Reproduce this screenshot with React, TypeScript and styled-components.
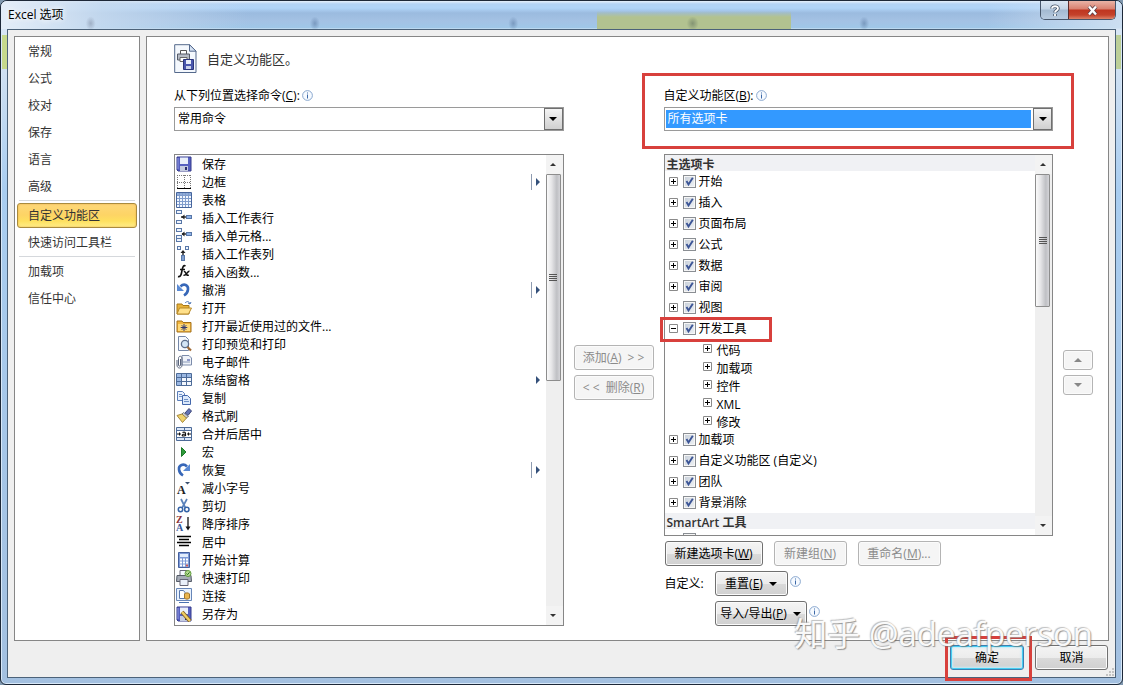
import React from "react";
import styled, { createGlobalStyle, css } from "styled-components";

const GlobalStyle = createGlobalStyle`
  *, *::before, *::after { box-sizing: border-box; }
  body {
    margin: 0;
    background: #7f97ae;
    font-family: "Open Sans", "Noto Sans CJK SC", sans-serif;
    font-size: 12px;
    line-height: 16px;
    color: #1a1a1a;
  }
  button, select, input { font: inherit; color: inherit; margin: 0; }
`;

/* ---------- window frame ---------- */

const Window = styled.div`
  position: relative;
  display: flex;
  flex-direction: column;
  min-height: 100vh;
  padding: 0 6px 6px;
  border: 1px solid #1d2838;
  border-radius: 7px 7px 6px 6px;
  background:
    linear-gradient(#c6d98c, #c6d98c) 0 34px / 6px 34px no-repeat,
    linear-gradient(#bccf98, #bccf98) 100% 34px / 6px 34px no-repeat,
    linear-gradient(#dfeaf7 0, #cfe0f2 70px, #a9cdf0 190px, #a3c0e0 100%);
  box-shadow: inset 0 0 0 1px #d8e8f8;
`;

const TitleBar = styled.header`
  display: flex;
  align-items: flex-start;
  justify-content: space-between;
  height: 28px;
  margin: 0 -6px;
  padding: 0 0 0 7px;
  border-radius: 6px 6px 0 0;
  background:
    radial-gradient(ellipse 5px 7px at 8% 80%, #8795ab99, transparent),
    radial-gradient(ellipse 5px 7px at 28% 80%, #5f7ea699, transparent),
    radial-gradient(ellipse 5px 7px at 45.7% 80%, #5f7ea699, transparent),
    radial-gradient(ellipse 6px 7px at 61.7% 80%, #66776099, transparent),
    radial-gradient(ellipse 5px 7px at 77% 80%, #5f7ea699, transparent),
    linear-gradient(transparent 10px, #b2c290 16px) 64.3% 0 / 194px 100% no-repeat,
    linear-gradient(90deg, #e4edf8 0, #c9dcf0cc 9%, #a9c8e800 22%, transparent 88%, #d7e5f4cc 100%),
    linear-gradient(#e6f0fb 0, #b3d3f5 3px, #b0d4f8 7px, #9bbbdf 12px, #a4c2e4 20px, #9fc7e8 27px, #d7e9f7 28px);
`;

const Title = styled.h1`
  margin: 0;
  padding-top: 6px;
  font-size: 12px;
  font-weight: 400;
  color: #000;
  text-shadow: 0 0 6px #fff, 0 0 6px #fff;
`;

const CaptionButtons = styled.div`
  display: flex;
  margin-right: 6px;
  border: 1px solid #47566b;
  border-top: 0;
  border-radius: 0 0 5px 5px;
  overflow: hidden;
`;

const CaptionButton = styled.button<{ $close?: boolean }>`
  display: grid;
  place-items: center;
  width: ${(p) => (p.$close ? 47 : 27)}px;
  height: 18px;
  padding: 0;
  border: 0;
  border-left: ${(p) => (p.$close ? "1px solid #5e2c2a" : "0")};
  background: ${(p) =>
    p.$close
      ? "linear-gradient(#e9b3a6 0, #d9806f 8px, #bf3520 9px, #c4422b 14px, #dd8268 18px)"
      : "linear-gradient(#dce7f3 0, #c3d4e6 8px, #a3b9d1 9px, #b8cbe0 18px)"};
`;

const Client = styled.main`
  flex: 1;
  display: flex;
  flex-direction: column;
  padding: 6px 6px 0;
  border: 1px solid #4c6279;
  background: #efefef;
`;

const Panels = styled.div`
  flex: 1;
  display: grid;
  grid-template-columns: 126px minmax(0, 1fr);
  gap: 6px;
`;

/* ---------- category list ---------- */

const Sidebar = styled.nav`
  display: flex;
  flex-direction: column;
  padding: 1px 2px 0;
  border: 1px solid #868686;
  background: #fff;
`;

const NavItem = styled.button<{ $active?: boolean }>`
  height: 25px;
  margin: 1px 0;
  padding: 0 10px;
  border: 1px solid transparent;
  border-radius: 3px;
  background: none;
  text-align: left;
  color: #333;
  ${(p) =>
    p.$active &&
    css`
      border-color: #a98b3e;
      background: linear-gradient(#fdd779 0, #fdd465 11px, #fee05f 17px, #fff296 25px);
      box-shadow: inset 0 0 2px #e9a94a;
    `}
`;

const NavSeparator = styled.hr`
  width: auto;
  height: 1px;
  margin: 0 2px 1px;
  border: 0;
  background: #d5d8dc;
`;

/* ---------- main page ---------- */

const Page = styled.section`
  padding: 7px 15px 14px 27px;
  border: 1px solid #868686;
  background: #fff;
`;

const PageHeading = styled.header`
  display: flex;
  align-items: center;
  gap: 10px;
  height: 30px;
  margin-bottom: 13px;
`;

const PageTitle = styled.h2`
  margin: 0;
  font-size: 13px;
  font-weight: 400;
  color: #333;
`;

const Columns = styled.div`
  display: grid;
  grid-template-columns: minmax(0, 1fr) 80px minmax(0, 1fr) 30px;
  column-gap: 10px;
  row-gap: 23px;
`;

const Field = styled.div<{ $column: number }>`
  grid-column: ${(p) => p.$column};
  position: relative;
  display: flex;
  flex-direction: column;
  gap: 4px;
`;

const FieldLabel = styled.label`
  display: flex;
  align-items: center;
  gap: 2px;
  height: 16px;
  color: #000;

  > span { padding-top: 2px; }
`;

const ComboFrame = styled.div`
  display: flex;
  height: 24px;
  border: 1px solid #9a9a9a;
  background: #fff;
`;

const ComboSelect = styled.select<{ $selected?: boolean }>`
  appearance: none;
  flex: 1;
  min-width: 0;
  margin: 2px 2px 2px 1px;
  padding: 0 2px;
  border: 0;
  outline: 0;
  line-height: 16px;
  background: ${(p) => (p.$selected ? "#3399ff" : "#fff")};
  color: ${(p) => (p.$selected ? "#fff" : "#000")};
`;

const ComboArrow = styled.span`
  display: grid;
  place-items: center;
  width: 19px;
  border: 1px solid #6f6f6f;
  background: linear-gradient(#f4f4f4, #d0d0d0);
`;

const ListFrame = styled.div`
  grid-column: 1;
  display: flex;
  min-height: 0;
  border: 1px solid #868686;
  background: #fff;
`;

const CommandList = styled.ul`
  flex: 1;
  min-width: 0;
  margin: 0;
  padding: 1px 6px 1px 1px;
  list-style: none;
`;

const CommandRow = styled.button`
  display: flex;
  align-items: flex-start;
  gap: 10px;
  width: 100%;
  height: 18px;
  padding: 0;
  border: 0;
  background: none;
  text-align: left;
  color: #000;

  > span { flex: 1; padding-top: 1px; }
`;

const SubmenuMark = styled.i<{ $split?: boolean }>`
  display: grid;
  place-items: center;
  height: 16px;
  padding-left: 4px;
  border-left: 1px solid ${(p) => (p.$split ? "#8e9bb0" : "transparent")};
`;

const MiddleButtons = styled.div`
  display: flex;
  flex-direction: column;
  gap: 5px;
  padding-top: 191px;
`;

const OrderButtons = styled(MiddleButtons)`
  padding-top: 196px;
`;

const PushButton = styled.button<{ $width?: number; $height?: number; $primary?: boolean }>`
  display: inline-flex;
  align-items: center;
  justify-content: center;
  gap: 6px;
  flex: none;
  width: ${(p) => (p.$width ? p.$width + "px" : "100%")};
  height: ${(p) => p.$height ?? 25}px;
  padding: 0;
  border: 1px solid #707070;
  border-radius: 3px;
  background: linear-gradient(#f4f4f4 0, #ececec 50%, #dadada 51%, #d0d0d0 100%);
  box-shadow: inset 0 0 0 1px #fbfbfb;
  white-space: nowrap;
  color: #000;

  &:disabled {
    border-color: #b4b4b4;
    background: #f5f5f5;
    color: #8b8b8b;
  }
  ${(p) =>
    p.$primary &&
    css`
      border-color: #3c7fb1;
      box-shadow: inset 0 0 0 1px #45cdf2, inset 0 0 2px 2px #c4ebf7;
    `}
`;

const RibbonColumn = styled.div`
  position: relative;
  display: flex;
  flex-direction: column;
  gap: 5px;
`;

const TreeFrame = styled(ListFrame)`
  flex: 1 1 0;
`;

const Tree = styled.div`
  flex: 1;
  min-width: 0;
  overflow: hidden;
`;

const TreeHeading = styled.h3`
  height: 16px;
  margin: 0;
  padding: 2px 2px 0;
  background: #f0f1f4;
  font-size: 12px;
  line-height: 15px;
  font-weight: 600;
  color: #333;
`;

const TreeRow = styled.div`
  display: flex;
  align-items: center;
  height: 21px;
  padding-left: 4px;
  color: #000;
`;

const TreeChild = styled(TreeRow)`
  gap: 5px;
  height: 18px;
  padding-left: 38px;

  > span { padding-top: 5px; }
`;

const Expander = styled.button`
  display: block;
  flex: none;
  width: 9px;
  height: 9px;
  padding: 0;
  border: 0;
  background: none;

  svg { display: block; }
`;

const CheckLabel = styled.label`
  display: flex;
  align-items: center;
  gap: 3px;
  margin-left: 5px;
`;

const CheckBox = styled.span`
  display: grid;
  width: 13px;
  height: 13px;

  > * { grid-area: 1 / 1; }
  svg { position: relative; pointer-events: none; }
`;

const CheckInput = styled.input`
  appearance: none;
  width: 13px;
  height: 13px;
  border: 1px solid #8a8e93;
  background: linear-gradient(135deg, #c6ced8, #f0f3f6);
  box-shadow: inset 0 0 0 1px #f6f6f6;
`;

const ButtonRow = styled.div<{ $gap: number }>`
  display: flex;
  gap: ${(p) => p.$gap}px;
  height: 25px;
  padding-left: 1px;
`;

const ResetGrid = styled.div`
  display: grid;
  grid-template-columns: 50px 1fr;
  row-gap: 5px;
  padding-left: 1px;

  > span { line-height: 25px; color: #000; }
  > div { grid-column: 2; padding-left: 0; }
`;

const InfoSlot = styled.span`
  padding-top: 5px;

  svg { display: block; }
`;

const Footer = styled.footer`
  display: flex;
  justify-content: flex-end;
  gap: 11px;
  height: 36px;
  padding: 4px 1px 0 0;
`;

const OkSlot = styled.div`
  position: relative;
  height: 25px;
`;

/* ---------- resize grip ---------- */

const Grip = styled.svg`
  position: absolute;
  right: 8px;
  bottom: 8px;
`;

/* ---------- scroll bar ---------- */

const Bar = styled.div`
  flex: none;
  display: flex;
  flex-direction: column;
  width: 17px;
  background: #efefef;
`;

const BarArrow = styled.button`
  display: grid;
  place-items: center;
  height: 19px;
  padding: 0 2px 0 0;
  border: 0;
  background: #f3f3f3;
`;

const BarTrack = styled.div`
  flex: 1;
`;

const BarThumb = styled.div<{ $share: number }>`
  display: grid;
  place-items: center;
  width: 15px;
  height: ${(p) => p.$share}%;
  border: 1px solid #8d8d8d;
  border-radius: 1px;
  background: linear-gradient(90deg, #fafafa 0, #e6e6e8 35%, #bfc0c4 75%, #d4d4d8 100%);
`;

/* ---------- overlays ---------- */

const Highlight = styled.div<{ $inset: string }>`
  position: absolute;
  inset: ${(p) => p.$inset};
  border: 3px solid #d8403c;
  pointer-events: none;
`;

const RowHighlight = styled(Highlight)`
  width: 112px;
  height: 25px;
`;

const Watermark = styled.div`
  position: absolute;
  right: 29px;
  bottom: 30px;
  font-family: "Open Sans", "Noto Sans CJK SC", sans-serif;
  font-size: 33px;
  line-height: 40px;
  font-weight: 400;
  white-space: nowrap;
  color: #fffffff0;
  text-shadow: -1px -1px 1px #88888888, 1px 1px 1px #666666aa;
  pointer-events: none;
`;

/* ---------- glyphs ---------- */

const Triangle = ({ dir, color = "#000", size = 4 }: { dir: "up" | "down" | "right"; color?: string; size?: number }) => {
  const w = size * 2;
  const shapes = {
    up: `M0 ${size}L${size} 0L${w} ${size}Z`,
    down: `M0 0H${w}L${size} ${size}Z`,
    right: `M0 0L${size} ${size}L0 ${w}Z`,
  };
  return (
    <svg width={dir === "right" ? size : w} height={dir === "right" ? w : size} aria-hidden="true">
      <path d={shapes[dir]} fill={color} />
    </svg>
  );
};

const Info = () => (
  <svg width="11" height="11" viewBox="0 0 11 11" aria-hidden="true">
    <circle cx="5.5" cy="5.5" r="4.9" fill="#f6faff" stroke="#7f9fc9" strokeWidth="0.9" />
    <path d="M5 2.4h1v1.2H5zM5 4.6h1v3.8H5z" fill="#3c69a8" />
  </svg>
);

const PlusMinus = ({ open }: { open?: boolean }) => (
  <svg width="9" height="9" viewBox="0 0 9 9" aria-hidden="true">
    <path d="M.5 .5h8v8h-8z" fill="#fff" stroke="#8a8a8a" />
    <path d={open ? "M2 4.5h5" : "M2 4.5h5M4.5 2v5"} stroke="#000" />
  </svg>
);

const Floppy = () => (
  <>
    <path d="M1 1h14v14H2l-1-1z" fill="#5660c0" stroke="#343b8c" />
    <path d="M4 1.5h8V8H4z" fill="#e9effa" />
    <path d="M4 10h8v5H4z" fill="#c4cbe0" />
    <path d="M9 11h2v3H9z" fill="#2a2f6a" />
    <path d="M2 2v11" stroke="#8f98e0" />
  </>
);

const Cell = ({ x, y, w = 5, h = 4, fill = "#eef3fb" }: { x: number; y: number; w?: number; h?: number; fill?: string }) => (
  <rect x={x + 0.5} y={y + 0.5} width={w} height={h} fill={fill} stroke="#5877a8" />
);

const icons: Record<string, React.ReactNode> = {
  save: <Floppy />,
  borders: (
    <>
      <path d="M1.5 1v13M8.5 1v13M14.5 1v13M1 1.5h14M1 8.5h14" stroke="#777" strokeDasharray="1 1" fill="none" />
      <path d="M1 14.5h14" stroke="#000" />
    </>
  ),
  table: (
    <>
      <path d="M.5 .5h15v15H.5z" fill="#f2f7ff" stroke="#46659c" />
      <path d="M1 1h14v2H1z" fill="#8fabd8" />
      <path d="M3.5 1v14M6.5 1v14M9.5 1v14M12.5 1v14M1 3.5h14M1 6.5h14M1 9.5h14M1 12.5h14" stroke="#7f9ccc" />
    </>
  ),
  row: (
    <>
      <Cell x={0} y={0} h={3} />
      <Cell x={0} y={10} h={3} />
      <Cell x={10} y={5} h={3} fill="#8fb2e6" />
      <path d="M5 7h5" stroke="#222" strokeWidth="1.4" />
      <path d="M5.5 7l3-2.5v5z" fill="#222" />
    </>
  ),
  cell: (
    <>
      <Cell x={0} y={0} h={3} />
      <Cell x={0} y={7} h={3} />
      <Cell x={0} y={10} h={3} />
      <Cell x={10} y={4} h={3} fill="#8fb2e6" />
      <path d="M6 6h4" stroke="#222" strokeWidth="1.4" />
      <path d="M5.5 6l3-2.500v5z" fill="#222" />
    </>
  ),
  column: (
    <>
      <Cell x={1} y={0} w={3} h={3} />
      <Cell x={9} y={0} w={3} h={3} />
      <Cell x={5} y={9} w={3} h={5} fill="#7f9fce" />
      <path d="M7 5v4" stroke="#222" strokeWidth="1.4" />
      <path d="M7 4l2.500 3h-5z" fill="#222" />
    </>
  ),
  fx: (
    <>
      <path d="M9.500 2C7.500 .8 6.600 3 6 6.500s-1.200 7-4 6M4 5.500h5" fill="none" stroke="#111" strokeWidth="1.6" />
      <path d="M7.800 7.500c2.200-1 1.800 4.500 5 3.800M13.500 7.300c-2.200-.5-3 4.700-6 4" fill="none" stroke="#111" strokeWidth="1.5" />
    </>
  ),
  undo: (
    <>
      <path d="M4.500 4.500C8 1 12.500 3 12 7.500c-.3 3-2 4.800-4 6" fill="none" stroke="#3767b8" strokeWidth="2.6" />
      <path d="M1 2v7h7z" fill="#5a8ad4" />
    </>
  ),
  open: (
    <>
      <path d="M1 4h5l1 1.500h6V14H1z" fill="#e8b23a" stroke="#a87818" />
      <path d="M3.500 8H15.500L12.500 14H1z" fill="#ffe08a" stroke="#b88a2a" />
      <path d="M9 3c2-2 4-2 5 1m0 0l-2-1m2 1l1-2" fill="none" stroke="#4a74b4" />
    </>
  ),
  recent: (
    <>
      <path d="M1 3h5l1 1.500h8V14H1z" fill="#f2b63e" stroke="#a4701a" />
      <path d="M2 6h12v7H2z" fill="#ffd978" />
      <path d="M8 6v7M4.700 9.500h6.600M5.700 7.200l4.600 4.600M10.300 7.200L5.700 11.800" stroke="#343a70" />
    </>
  ),
  preview: (
    <>
      <path d="M2.500 .5h7l3 3v11h-10z" fill="#f5f8fd" stroke="#7487a8" />
      <circle cx="9" cy="8" r="3.6" fill="#d3e5f6" stroke="#5d6f8c" strokeWidth="1.3" />
      <path d="M11.500 11l3.500 3.500" stroke="#a06a35" strokeWidth="2.2" />
    </>
  ),
  mail: (
    <>
      <path d="M6 1.500h7l2.500 2.500v7H6z" fill="#eef2f9" stroke="#7c8cab" />
      <path d="M11 5h3v2h-3z" fill="#8d98c8" />
      <path d="M7 8h7" stroke="#8a9ab8" />
      <path d="M1 6v5c0 4 5 4 5 0V4.500c0-3-3.500-3-3.500 0V11c0 1.500 2 1.500 2 0V5" fill="none" stroke="#59647c" />
    </>
  ),
  freeze: (
    <>
      <path d="M.5 1.500h15v12H.5z" fill="#f3f7fd" stroke="#4d6b98" />
      <path d="M1 2h14v3H1zM1 2h4v11H1z" fill="#9bb8e2" />
      <path d="M5.500 1v12M10.500 1v12M1 5.500h14M1 9.500h14" stroke="#4d6b98" />
    </>
  ),
  copy: (
    <>
      <path d="M1.500 1.500h5l2 2v7h-7z" fill="#eaf1fc" stroke="#5a7db8" />
      <path d="M6.500 5.500h5l3 3v6h-8z" fill="#dce9fb" stroke="#4468ac" />
      <path d="M3 4.500h3M3 6.500h3M8 9.500h4M8 11.500h5" stroke="#6f91c6" />
    </>
  ),
  brush: (
    <>
      <path d="M9 5l4-4.500L15.500 3 12 7.500z" fill="#6272b4" stroke="#3d477a" />
      <path d="M7.500 4.500l5 4L10 10 6 6z" fill="#c8ccd8" stroke="#777" />
      <path d="M6 6l4.500 4-4 4.500L1 7.500z" fill="#f0d36c" stroke="#a8893a" />
    </>
  ),
  merge: (
    <>
      <path d="M.5 1.500h15v13H.5z" fill="#dce7f8" stroke="#4d6b98" />
      <path d="M1 4.500h14M1 11.500h14M8.500 1v3M8.500 12v3" stroke="#4d6b98" />
      <path d="M1 5h14v6H1z" fill="#fff" />
      <path d="M1 8h3M15 8h-3" stroke="#111" />
      <path d="M3 6l2 2-2 2zM13 6l-2 2 2 2z" fill="#111" />
      <path d="M6.500 6.500c2-1 3 0 3 1v2.500M9.500 8c-4 0-4 2-2 2 1 0 2-.7 2-1" stroke="#111" fill="none" strokeWidth="1.2" />
    </>
  ),
  macro: <path d="M5.500 3.500v9l4.500-4.500z" fill="#2f9a3a" stroke="#1d7a2a" />,
  redo: (
    <>
      <path d="M11 4.500C7.500 1 2.500 3 3 7.500c.3 3 2 4.800 4 6" fill="none" stroke="#3767b8" strokeWidth="2.6" />
      <path d="M14 2v7H7z" fill="#5a8ad4" />
    </>
  ),
  shrink: (
    <>
      <text x="1" y="14" fontFamily="Liberation Serif, serif" fontWeight="700" fontSize="12" fill="#222">A</text>
      <path d="M9 2h5l-2.500 2.500z" fill="#39506f" />
    </>
  ),
  cut: (
    <>
      <path d="M5 1l4.500 9M11 1L6 10" stroke="#5a82bb" strokeWidth="1.7" />
      <circle cx="4.5" cy="11.5" r="2.2" fill="none" stroke="#3463a8" strokeWidth="1.5" />
      <circle cx="10.8" cy="11.5" r="2.2" fill="none" stroke="#3463a8" strokeWidth="1.5" />
    </>
  ),
  sort: (
    <>
      <text x="0" y="7" fontFamily="Liberation Serif, serif" fontWeight="700" fontSize="10" fill="#8a3038">Z</text>
      <text x="0" y="15" fontFamily="Liberation Serif, serif" fontWeight="700" fontSize="10" fill="#35569a">A</text>
      <path d="M12 1v12" stroke="#111" strokeWidth="1.3" />
      <path d="M9.500 10.500h5L12 14.500z" fill="#111" />
    </>
  ),
  center: <path d="M1 2.500h14M3 5.500h10M1 8.500h14M3 11.500h10" stroke="#000" strokeWidth="1.3" />,
  calc: (
    <>
      <path d="M2.500 .5h11v15h-11z" fill="#7d9ad6" stroke="#435f9e" />
      <path d="M4 2h8v3H4z" fill="#e2edfb" />
      <path d="M4 7.500h8M4 10.500h8M4 13.500h8" stroke="#fff" strokeWidth="2" strokeDasharray="2 1" />
      <path d="M10 13.500h2" stroke="#c85858" strokeWidth="2" />
    </>
  ),
  print: (
    <>
      <path d="M4 6V.5h7V6" fill="#f5f8ff" stroke="#667" />
      <path d="M1 5.500h14l.5 6H.5z" fill="#a5abb6" stroke="#555c68" />
      <path d="M4 9.500h8v6H4z" fill="#eaf0fa" stroke="#667" />
      <circle cx="12" cy="3.5" r="3" fill="#b7dc92" stroke="#5e9a3c" />
      <path d="M10.500 3.500l1 1.200L13.500 2.300" stroke="#2a6c20" fill="none" />
    </>
  ),
  link: (
    <>
      <path d="M.5 .5h15v12H.5z" fill="#e8f1fd" stroke="#6786b8" />
      <path d="M3.500 2.500h4l1.500 2v6H3.500z" fill="#fff" stroke="#5878ac" />
      <path d="M8.500 6c0-1.500 5-1.500 5 0v4c0 1.500-5 1.500-5 0z" fill="#eab54e" stroke="#a2752a" />
      <path d="M3 14.500h10" stroke="#4a73b0" />
    </>
  ),
  saveAs: (
    <>
      <Floppy />
      <path d="M6 6l8 9" stroke="#7c5a20" strokeWidth="4" />
      <path d="M6 6l8 9" stroke="#f0cc62" strokeWidth="2.4" />
    </>
  ),
};

const PageIcon = () => (
  <svg width="23" height="30" viewBox="0 0 23 30" aria-hidden="true">
    <path d="M.7 .7h15l6.300 6.300v21.500H.7z" fill="#f4f8fd" stroke="#54698c" />
    <path d="M15.500 .7v6.500H22z" fill="#d5e2f3" stroke="#54698c" />
    <path d="M6.500 10V6.500h6V10" fill="#fff" stroke="#555" />
    <path d="M3.500 10h12v6h-12z" fill="#b6bbc5" stroke="#555b68" />
    <path d="M6 13.500h7v4H6z" fill="#fff" stroke="#666" />
    <path d="M9.500 15.500h10v10h-10z" fill="#4a57ad" stroke="#2b357c" />
    <path d="M12 16h5v4h-5z" fill="#e8eefa" />
    <path d="M12 22h5v3h-5z" fill="#cbd3ea" />
  </svg>
);

/* ---------- data ---------- */

const commands: { icon: string; name: string; menu?: "split" | "plain" }[] = [
  { icon: "save", name: "保存" },
  { icon: "borders", name: "边框", menu: "split" },
  { icon: "table", name: "表格" },
  { icon: "row", name: "插入工作表行" },
  { icon: "cell", name: "插入单元格..." },
  { icon: "column", name: "插入工作表列" },
  { icon: "fx", name: "插入函数..." },
  { icon: "undo", name: "撤消", menu: "split" },
  { icon: "open", name: "打开" },
  { icon: "recent", name: "打开最近使用过的文件..." },
  { icon: "preview", name: "打印预览和打印" },
  { icon: "mail", name: "电子邮件" },
  { icon: "freeze", name: "冻结窗格", menu: "plain" },
  { icon: "copy", name: "复制" },
  { icon: "brush", name: "格式刷" },
  { icon: "merge", name: "合并后居中" },
  { icon: "macro", name: "宏" },
  { icon: "redo", name: "恢复", menu: "split" },
  { icon: "shrink", name: "减小字号" },
  { icon: "cut", name: "剪切" },
  { icon: "sort", name: "降序排序" },
  { icon: "center", name: "居中" },
  { icon: "calc", name: "开始计算" },
  { icon: "print", name: "快速打印" },
  { icon: "link", name: "连接" },
  { icon: "saveAs", name: "另存为" },
];

const tabs: { name: string; groups?: string[] }[] = [
  { name: "开始" },
  { name: "插入" },
  { name: "页面布局" },
  { name: "公式" },
  { name: "数据" },
  { name: "审阅" },
  { name: "视图" },
  { name: "开发工具", groups: ["代码", "加载项", "控件", "XML", "修改"] },
  { name: "加载项" },
  { name: "自定义功能区 (自定义)" },
  { name: "团队" },
  { name: "背景消除" },
];

const categories = [
  ["常规", "公式", "校对", "保存", "语言", "高级"],
  ["自定义功能区", "快速访问工具栏"],
  ["加载项", "信任中心"],
];

/* ---------- composed parts ---------- */

const ScrollBar = ({ share }: { share: number }) => (
  <Bar>
    <BarArrow aria-label="向上滚动"><Triangle dir="up" color="#333" size={3} /></BarArrow>
    <BarTrack>
      <BarThumb $share={share}>
        <svg width="8" height="8" aria-hidden="true">
          <path d="M0 .5h8M0 2.5h8M0 4.5h8M0 6.5h8" stroke="#555" />
        </svg>
      </BarThumb>
    </BarTrack>
    <BarArrow aria-label="向下滚动"><Triangle dir="down" color="#333" size={3} /></BarArrow>
  </Bar>
);

const Combo = ({ id, value, selected }: { id: string; value: string; selected?: boolean }) => (
  <ComboFrame>
    <ComboSelect id={id} $selected={selected} defaultValue={value}>
      <option>{value}</option>
    </ComboSelect>
    <ComboArrow><Triangle dir="down" /></ComboArrow>
  </ComboFrame>
);

const TabRow = ({ name, open }: { name: string; open?: boolean }) => (
  <TreeRow>
    <Expander aria-label={open ? "折叠" : "展开"}><PlusMinus open={open} /></Expander>
    <CheckLabel>
      <CheckBox>
        <CheckInput type="checkbox" defaultChecked />
        <svg width="13" height="13" viewBox="0 0 13 13" aria-hidden="true">
          <path d="M3.500 6l2 3.500L9.800 2.800" fill="none" stroke="#3c5596" strokeWidth="1.9" />
        </svg>
      </CheckBox>
      {name}
    </CheckLabel>
  </TreeRow>
);

export default function App() {
  return (
    <>
      <GlobalStyle />
      <Window>
        <TitleBar>
          <Title>Excel 选项</Title>
          <CaptionButtons>
            <CaptionButton aria-label="帮助">
              <svg width="12" height="13" viewBox="0 0 12 13" aria-hidden="true">
                <path d="M3 4.500C3 1.500 9 1.500 9 4.500 9 6.500 6 6.500 6 8.500M6 10v2" fill="none" stroke="#4b5a6e" strokeWidth="3.6" />
                <path d="M3 4.500C3 1.500 9 1.500 9 4.500 9 6.500 6 6.500 6 8.500M6 10v2" fill="none" stroke="#fff" strokeWidth="1.8" />
              </svg>
            </CaptionButton>
            <CaptionButton $close aria-label="关闭">
              <svg width="13" height="11" viewBox="0 0 13 11" aria-hidden="true">
                <path d="M3 1.500l7 8M10 1.500l-7 8" stroke="#5b4047" strokeWidth="4" />
                <path d="M3 1.500l7 8M10 1.500l-7 8" stroke="#fff" strokeWidth="2.4" />
              </svg>
            </CaptionButton>
          </CaptionButtons>
        </TitleBar>

        <Client>
          <Panels>
            <Sidebar>
              {categories.map((group, i) => (
                <React.Fragment key={i}>
                  {i > 0 && <NavSeparator />}
                  {group.map((name) => (
                    <NavItem key={name} $active={name === "自定义功能区"}>{name}</NavItem>
                  ))}
                </React.Fragment>
              ))}
            </Sidebar>

            <Page>
              <PageHeading>
                <PageIcon />
                <PageTitle>自定义功能区。</PageTitle>
              </PageHeading>

              <Columns>
                <Field $column={1}>
                  <FieldLabel htmlFor="source"><span>从下列位置选择命令(<u>C</u>):</span><Info /></FieldLabel>
                  <Combo id="source" value="常用命令" />
                </Field>
                <Field $column={3}>
                  <FieldLabel htmlFor="target"><span>自定义功能区(<u>B</u>):</span><Info /></FieldLabel>
                  <Combo id="target" value="所有选项卡" selected />
                  <Highlight $inset="-14px -21px -18px -22px" />
                </Field>

                <ListFrame>
                  <CommandList>
                    {commands.map((c) => (
                      <li key={c.name}>
                        <CommandRow>
                          <svg width="16" height="16" viewBox="0 0 16 16" aria-hidden="true">{icons[c.icon]}</svg>
                          <span>{c.name}</span>
                          {c.menu && (
                            <SubmenuMark $split={c.menu === "split"}>
                              <Triangle dir="right" color="#34507a" />
                            </SubmenuMark>
                          )}
                        </CommandRow>
                      </li>
                    ))}
                  </CommandList>
                  <ScrollBar share={48} />
                </ListFrame>

                <MiddleButtons>
                  <PushButton disabled><span>添加(<u>A</u>)</span><span>&gt; &gt;</span></PushButton>
                  <PushButton disabled><span>&lt; &lt;</span><span>删除(<u>R</u>)</span></PushButton>
                </MiddleButtons>

                <RibbonColumn>
                  <TreeFrame>
                    <Tree>
                      <TreeHeading>主选项卡</TreeHeading>
                      {tabs.map((tab, i) => (
                        <React.Fragment key={i}>
                          <TabRow name={tab.name} open={!!tab.groups} />
                          {tab.groups?.map((group) => (
                            <TreeChild key={group}>
                              <Expander aria-label="展开"><PlusMinus /></Expander>
                              <span>{group}</span>
                            </TreeChild>
                          ))}
                        </React.Fragment>
                      ))}
                      <TreeHeading>SmartArt 工具</TreeHeading>
                      <TabRow name="" />
                    </Tree>
                    <ScrollBar share={39} />
                  </TreeFrame>
                  <RowHighlight $inset="163px auto auto -4px" />
                  <ButtonRow $gap={11}>
                    <PushButton $width={98}><span>新建选项卡(<u>W</u>)</span></PushButton>
                    <PushButton $width={73} disabled><span>新建组(<u>N</u>)</span></PushButton>
                    <PushButton $width={83} disabled><span>重命名(<u>M</u>)...</span></PushButton>
                  </ButtonRow>
                  <ResetGrid>
                    <span>自定义:</span>
                    <ButtonRow $gap={2}>
                      <PushButton $width={73}><span>重置(<u>E</u>)</span><Triangle dir="down" /></PushButton>
                      <InfoSlot><Info /></InfoSlot>
                    </ButtonRow>
                    <ButtonRow $gap={2}>
                      <PushButton $width={92}><span>导入/导出(<u>P</u>)</span><Triangle dir="down" /></PushButton>
                      <InfoSlot><Info /></InfoSlot>
                    </ButtonRow>
                  </ResetGrid>
                </RibbonColumn>

                <OrderButtons>
                  <PushButton $height={20} disabled aria-label="上移"><Triangle dir="up" color="#888" /></PushButton>
                  <PushButton $height={20} disabled aria-label="下移"><Triangle dir="down" color="#888" /></PushButton>
                </OrderButtons>
              </Columns>
            </Page>
          </Panels>

          <Footer>
            <OkSlot>
              <PushButton $width={74} $primary>确定</PushButton>
              <Highlight $inset="-9px -8px -11px -5px" />
            </OkSlot>
            <PushButton $width={73}>取消</PushButton>
          </Footer>
          <Grip width="8" height="8" aria-hidden="true">
            <path d="M6 0h2v2H6zM6 3h2v2H6zM6 6h2v2H6zM3 3h2v2H3zM3 6h2v2H3zM0 6h2v2H0z" fill="#c3c3c3" />
          </Grip>
        </Client>

        <Watermark>知乎 @adeafperson</Watermark>
      </Window>
    </>
  );
}
